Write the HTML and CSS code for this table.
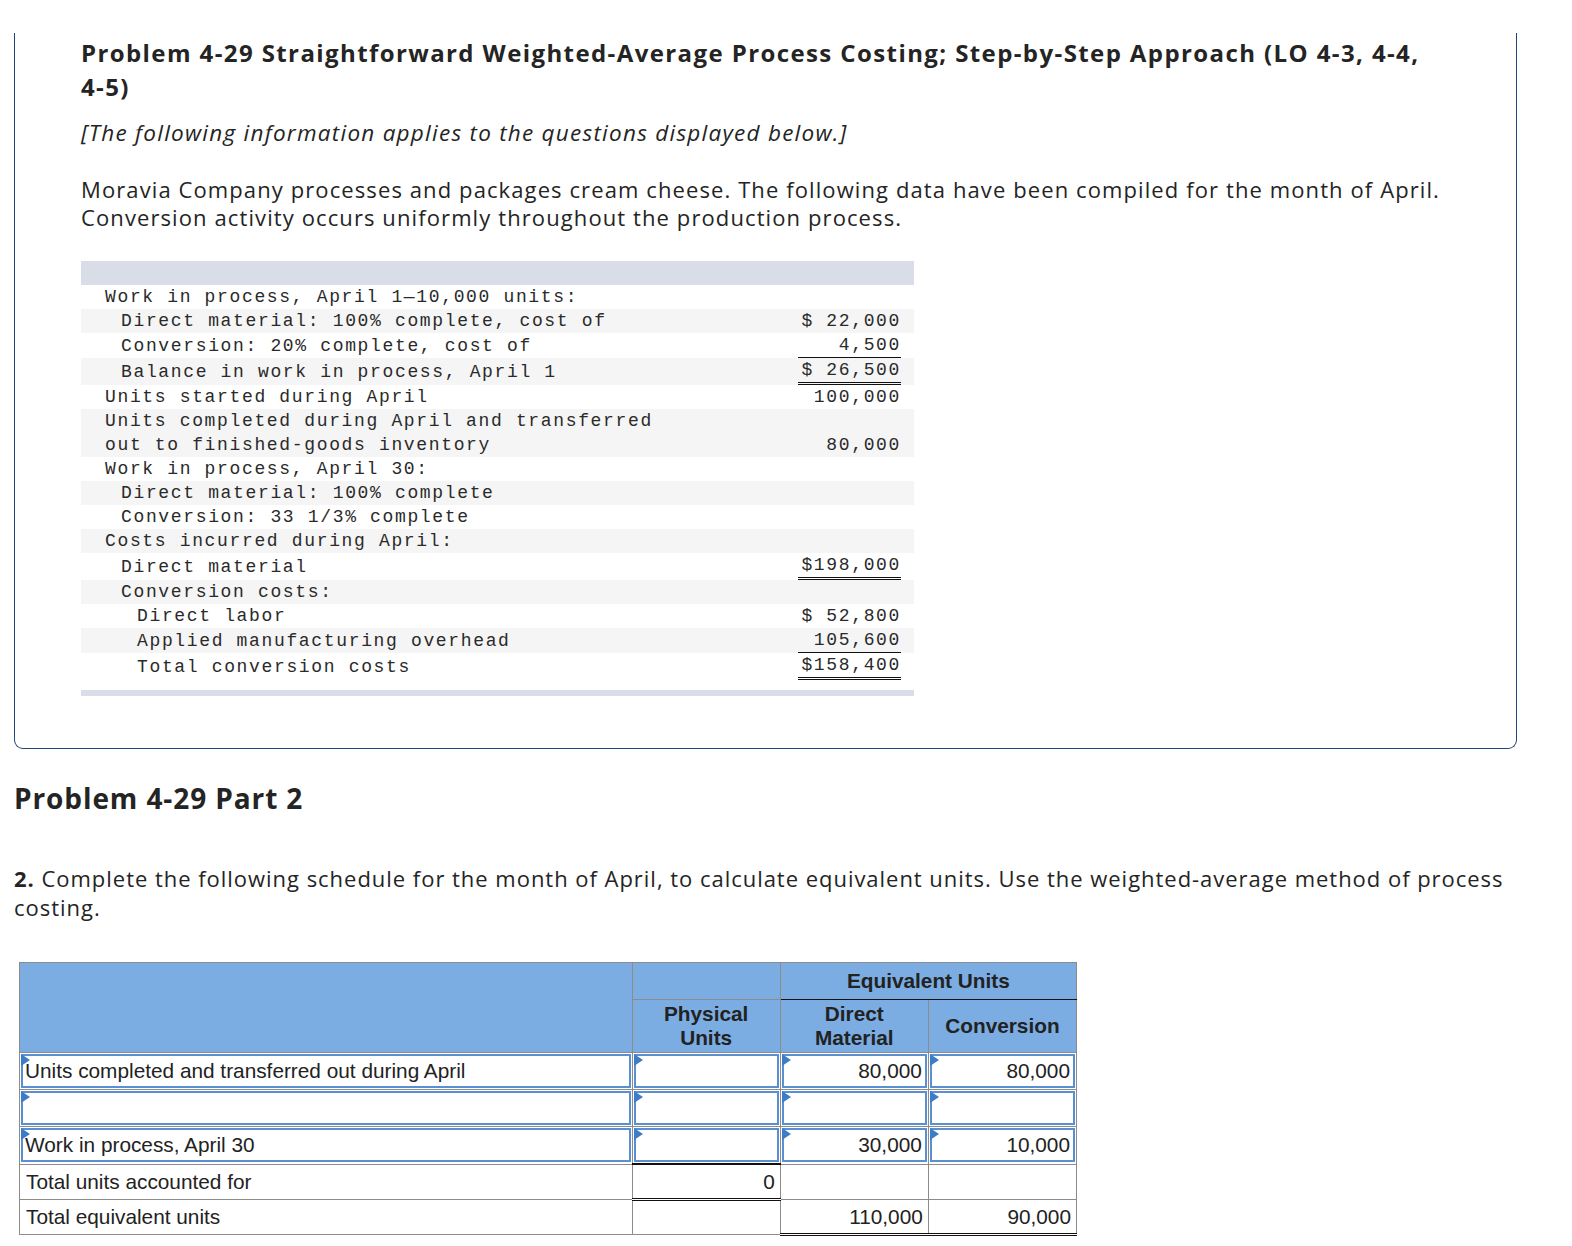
FILE: index.html
```html
<!DOCTYPE html>
<html>
<head>
<meta charset="utf-8">
<title>Problem 4-29</title>
<link rel="stylesheet" href="styles.css">
</head>
<body>
<div class="panel">
  <h1 class="title">Problem 4-29 Straightforward Weighted-Average Process Costing; Step-by-Step Approach (LO 4-3, 4-4,<br>4-5)</h1>
  <p class="note">[The following information applies to the questions displayed below.]</p>
  <p class="intro">Moravia Company processes and packages cream cheese. The following data have been compiled for the month of April.<br>Conversion activity occurs uniformly throughout the production process.</p>
  <table class="data">
    <thead><tr class="band-top"><th></th><th></th></tr></thead>
    <tbody>
      <tr><td class="l0">Work in process, April 1—10,000 units:</td><td class="amt"></td></tr>
      <tr class="g"><td class="l1">Direct material: 100% complete, cost of</td><td class="amt"><span>$ 22,000</span></td></tr>
      <tr><td class="l1">Conversion: 20% complete, cost of</td><td class="amt"><span class="u1">4,500</span></td></tr>
      <tr class="g"><td class="l1">Balance in work in process, April 1</td><td class="amt"><span class="u2">$ 26,500</span></td></tr>
      <tr><td class="l0">Units started during April</td><td class="amt"><span>100,000</span></td></tr>
      <tr class="g"><td class="l0">Units completed during April and transferred<br>out to finished-goods inventory</td><td class="amt bot"><span>80,000</span></td></tr>
      <tr><td class="l0">Work in process, April 30:</td><td class="amt"></td></tr>
      <tr class="g"><td class="l1">Direct material: 100% complete</td><td class="amt"></td></tr>
      <tr><td class="l1">Conversion: 33 1/3% complete</td><td class="amt"></td></tr>
      <tr class="g"><td class="l0">Costs incurred during April:</td><td class="amt"></td></tr>
      <tr><td class="l1">Direct material</td><td class="amt"><span class="u2">$198,000</span></td></tr>
      <tr class="g"><td class="l1">Conversion costs:</td><td class="amt"></td></tr>
      <tr><td class="l2">Direct labor</td><td class="amt"><span>$ 52,800</span></td></tr>
      <tr class="g"><td class="l2">Applied manufacturing overhead</td><td class="amt"><span class="u1">105,600</span></td></tr>
      <tr><td class="l2">Total conversion costs</td><td class="amt"><span class="u2">$158,400</span></td></tr>
      <tr class="spacer"><td></td><td></td></tr>
    </tbody>
    <tfoot><tr class="band-bot"><td></td><td></td></tr></tfoot>
  </table>
</div>

<h2 class="part">Problem 4-29 Part 2</h2>
<p class="question"><b>2.</b> Complete the following schedule for the month of April, to calculate equivalent units. Use the weighted-average method of process<br>costing.</p>

<table class="sched">
  <colgroup>
    <col class="c-label"><col class="c-num"><col class="c-num"><col class="c-num">
  </colgroup>
  <thead>
    <tr class="h1">
      <th rowspan="2"></th>
      <th class="phys-top"></th>
      <th colspan="2" class="eq">Equivalent Units</th>
    </tr>
    <tr class="h2">
      <th>Physical<br>Units</th>
      <th>Direct<br>Material</th>
      <th>Conversion</th>
    </tr>
  </thead>
  <tbody>
    <tr class="inrow">
      <td><div class="field"><i class="flag"></i>Units completed and transferred out during April</div></td>
      <td><div class="field num"><i class="flag"></i></div></td>
      <td><div class="field num"><i class="flag"></i>80,000</div></td>
      <td><div class="field num"><i class="flag"></i>80,000</div></td>
    </tr>
    <tr class="inrow">
      <td><div class="field"><i class="flag"></i></div></td>
      <td><div class="field num"><i class="flag"></i></div></td>
      <td><div class="field num"><i class="flag"></i></div></td>
      <td><div class="field num"><i class="flag"></i></div></td>
    </tr>
    <tr class="inrow">
      <td><div class="field"><i class="flag"></i>Work in process, April 30</div></td>
      <td><div class="field num"><i class="flag"></i></div></td>
      <td><div class="field num"><i class="flag"></i>30,000</div></td>
      <td><div class="field num"><i class="flag"></i>10,000</div></td>
    </tr>
    <tr class="plain">
      <td class="lbl">Total units accounted for</td>
      <td class="n sum">0</td>
      <td class="n"></td>
      <td class="n"></td>
    </tr>
    <tr class="plain">
      <td class="lbl">Total equivalent units</td>
      <td class="n"></td>
      <td class="n total">110,000</td>
      <td class="n total">90,000</td>
    </tr>
  </tbody>
</table>
</body>
</html>
```

FILE: styles.css
```css
html, body {
  margin: 0;
  padding: 0;
  background: #ffffff;
}

body {
  font-family: "Open Sans", "Noto Sans", sans-serif;
  color: #242424;
  padding-bottom: 12px;
}

.panel {
  margin: 33px 0 0 14px;
  width: 1503px;
  box-sizing: border-box;
  border: 1.5px solid #23457a;
  border-top: none;
  border-radius: 0 0 9px 9px;
  padding: 3px 0 52px 66px;
}

.title {
  margin: 0;
  font-size: 24px;
  line-height: 34px;
  font-weight: 700;
  letter-spacing: 1.4px;
  color: #242424;
}

.note {
  margin: 15px 0 0;
  font-size: 22.5px;
  line-height: 28px;
  font-style: italic;
  letter-spacing: 1.25px;
}

.intro {
  margin: 28px 0 0;
  font-size: 22px;
  line-height: 28px;
  letter-spacing: 1.1px;
}

/* ---------- data table ---------- */
.data {
  margin-top: 30px;
  width: 833px;
  border-collapse: collapse;
  font-family: "Liberation Mono", "DejaVu Sans Mono", monospace;
  font-size: 18px;
  letter-spacing: 1.65px;
  color: #2a2a2a;
}

.data td, .data th {
  padding: 0;
  line-height: 24px;
  vertical-align: middle;
  white-space: pre;
}

.band-top th {
  height: 24px;
  background: #d9dde8;
}

.band-bot td {
  height: 6px;
  line-height: 6px;
  background: #d9dde8;
}

.spacer td {
  height: 10px;
  line-height: 10px;
}

.data tr.g td {
  background: #f5f5f5;
}

.l0 { padding-left: 24px !important; }
.l1 { padding-left: 40px !important; }
.l2 { padding-left: 56px !important; }

.amt {
  text-align: right;
  padding-right: 13px !important;
  width: 110px;
}

.amt.bot {
  vertical-align: bottom !important;
}

.amt span {
  display: inline-block;
  min-width: 103px;
  text-align: right;
  line-height: 24px;
}

.amt span.u1 {
  border-bottom: 1px solid #111111;
}

.amt span.u2 {
  border-bottom: 3px double #111111;
}

/* ---------- part 2 ---------- */
.part {
  margin: 32px 0 0 14px;
  font-size: 28px;
  line-height: 34px;
  font-weight: 700;
  letter-spacing: 0.9px;
}

.question {
  margin: 49px 0 0 14px;
  font-size: 22px;
  line-height: 29px;
  letter-spacing: 0.97px;
}

.question b {
  font-weight: 700;
}

/* ---------- schedule table ---------- */
.sched {
  margin: 40px 0 0 19px;
  width: 1058px;
  border-collapse: collapse;
  table-layout: fixed;
  font-family: "Liberation Sans", Arial, sans-serif;
  font-size: 20.8px;
  color: #222222;
}

.c-label { width: 612px; }
.c-num { width: 148px; }

.sched th, .sched td {
  border: 1px solid #8c8c8c;
  padding: 0;
}

.sched th {
  background: #7badE3;
  font-weight: 700;
  font-size: 20.8px;
  line-height: 24px;
  text-align: center;
  color: #222222;
}

.h1 th { height: 36px; }
.h2 th { height: 52px; }

.sched th.eq {
  border-bottom: 1px solid #111111;
}

.inrow td {
  height: 36px;
  padding: 1px;
  box-sizing: border-box;
}

.field {
  position: relative;
  height: 30px;
  line-height: 30px;
  border: 2px solid #5a8fd2;
  background: #ffffff;
  padding: 0 3px 0 2px;
  white-space: nowrap;
  overflow: visible;
}

.field.num {
  text-align: right;
}

.flag {
  position: absolute;
  left: -2px;
  top: -2px;
  width: 0;
  height: 0;
  border-left: 9px solid #3d7cc8;
  border-top: 6px solid transparent;
  border-bottom: 6px solid transparent;
}

.plain td {
  height: 33px;
  line-height: 24px;
}

.plain td.lbl {
  padding-left: 6px;
}

.plain td.n {
  text-align: right;
  padding-right: 5px;
}

.plain td.sum {
  border-top: 2px solid #111111;
  border-bottom: 3px double #111111;
}

.plain td.total {
  border-top: 1px solid #111111;
  border-bottom: 3px double #111111;
}
```
